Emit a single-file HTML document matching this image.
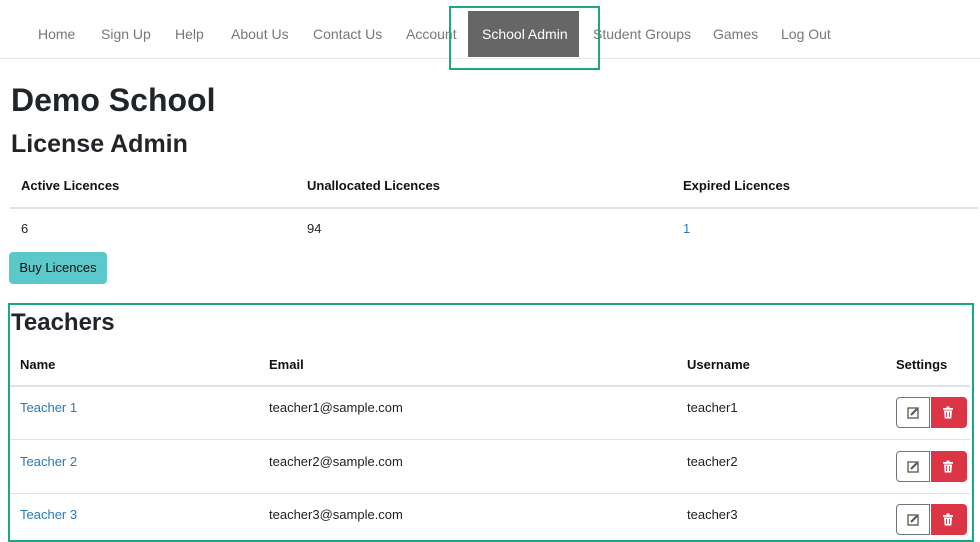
<!DOCTYPE html><html><head><style>
body{margin:0;width:980px;height:542px;overflow:hidden;background:#fff;font-family:"Liberation Sans",sans-serif;color:#212529;position:relative}
.a{position:absolute;white-space:nowrap}
.nav{font-size:14px;color:#777;top:26px}
.th{font-size:13px;font-weight:bold;color:#111}
.td{font-size:13px;color:#222}
.lk{color:#2a7ab8}
.hl{position:absolute;height:1px;background:#dee2e6}
.eb{position:absolute;width:34px;height:31px;border:1px solid #6c757d;border-radius:4px 0 0 4px;box-sizing:border-box;background:#fff;left:896px}
.db{position:absolute;width:36px;height:31px;background:#dc3545;border-radius:0 4px 4px 0;left:931px}
</style></head><body>
<div class="hl" style="left:0;width:980px;top:58px;background:#e8e8e8"></div>
<div class="a" style="left:468px;top:11px;width:111px;height:46px;background:#666"></div>
<div class="a nav" style="left:38px">Home</div>
<div class="a nav" style="left:101px">Sign Up</div>
<div class="a nav" style="left:175px">Help</div>
<div class="a nav" style="left:231px">About Us</div>
<div class="a nav" style="left:313px">Contact Us</div>
<div class="a nav" style="left:406px">Account</div>
<div class="a nav" style="left:482px;color:#fff">School Admin</div>
<div class="a nav" style="left:593px">Student Groups</div>
<div class="a nav" style="left:713px">Games</div>
<div class="a nav" style="left:781px">Log Out</div>
<div class="a" style="left:449px;top:6px;width:147px;height:60px;border:2.5px solid #1aa884"></div>
<div class="a" style="left:11px;top:82px;font-size:32px;font-weight:bold">Demo School</div>
<div class="a" style="left:11px;top:130px;font-size:25px;font-weight:bold">License Admin</div>
<div class="a th" style="left:21px;top:178px">Active Licences</div>
<div class="a th" style="left:307px;top:178px">Unallocated Licences</div>
<div class="a th" style="left:683px;top:178px">Expired Licences</div>
<div class="hl" style="left:10px;width:968px;top:207px;height:2px"></div>
<div class="a td" style="left:21px;top:221px">6</div>
<div class="a td" style="left:307px;top:221px">94</div>
<div class="a td lk" style="left:683px;top:221px">1</div>
<div class="a" style="left:9px;top:252px;width:98px;height:32px;background:#5bc8cb;border-radius:4px;font-size:13px;line-height:32px;text-align:center;color:#111">Buy Licences</div>
<div class="a" style="left:8px;top:303px;width:962px;height:235px;border:2.5px solid #1aa884"></div>
<div class="a" style="left:11px;top:309px;font-size:24px;font-weight:bold">Teachers</div>
<div class="a th" style="left:20px;top:357px">Name</div>
<div class="a th" style="left:269px;top:357px">Email</div>
<div class="a th" style="left:687px;top:357px">Username</div>
<div class="a th" style="left:896px;top:357px">Settings</div>
<div class="hl" style="left:10px;width:960px;top:385px;height:2px"></div>
<div class="hl" style="left:10px;width:960px;top:439px"></div>
<div class="hl" style="left:10px;width:960px;top:493px"></div>
<div class="a td lk" style="left:20px;top:400px">Teacher 1</div><div class="a td" style="left:269px;top:400px">teacher1@sample.com</div><div class="a td" style="left:687px;top:400px">teacher1</div>
<div class="a td lk" style="left:20px;top:454px">Teacher 2</div><div class="a td" style="left:269px;top:454px">teacher2@sample.com</div><div class="a td" style="left:687px;top:454px">teacher2</div>
<div class="a td lk" style="left:20px;top:507px">Teacher 3</div><div class="a td" style="left:269px;top:507px">teacher3@sample.com</div><div class="a td" style="left:687px;top:507px">teacher3</div>
<div class="eb" style="top:397px"></div><div class="db" style="top:397px"></div>
<div class="eb" style="top:451px"></div><div class="db" style="top:451px"></div>
<div class="eb" style="top:504px"></div><div class="db" style="top:504px"></div>
<svg class="a" style="left:0;top:0" width="980" height="542">
<defs>
<g id="ed"><rect x="-5" y="-5" width="10" height="10" fill="none" stroke="#555" stroke-width="1.3"/><path d="M-2 2 L4 -4" stroke="#555" stroke-width="2"/></g>
<g id="tr" fill="#fff"><rect x="-5" y="-5" width="10" height="1.8"/><rect x="-1.5" y="-6.5" width="3" height="1.5"/><path d="M-4 -2.5h8l-0.7 8h-6.6z"/><path d="M-1.5 -1v5M1.5 -1v5" stroke="#dc3545" stroke-width="0.9"/></g>
</defs>
<use href="#ed" x="913" y="413"/><use href="#tr" x="948" y="413"/>
<use href="#ed" x="913" y="467"/><use href="#tr" x="948" y="467"/>
<use href="#ed" x="913" y="520"/><use href="#tr" x="948" y="520"/>
</svg>
</body></html>
